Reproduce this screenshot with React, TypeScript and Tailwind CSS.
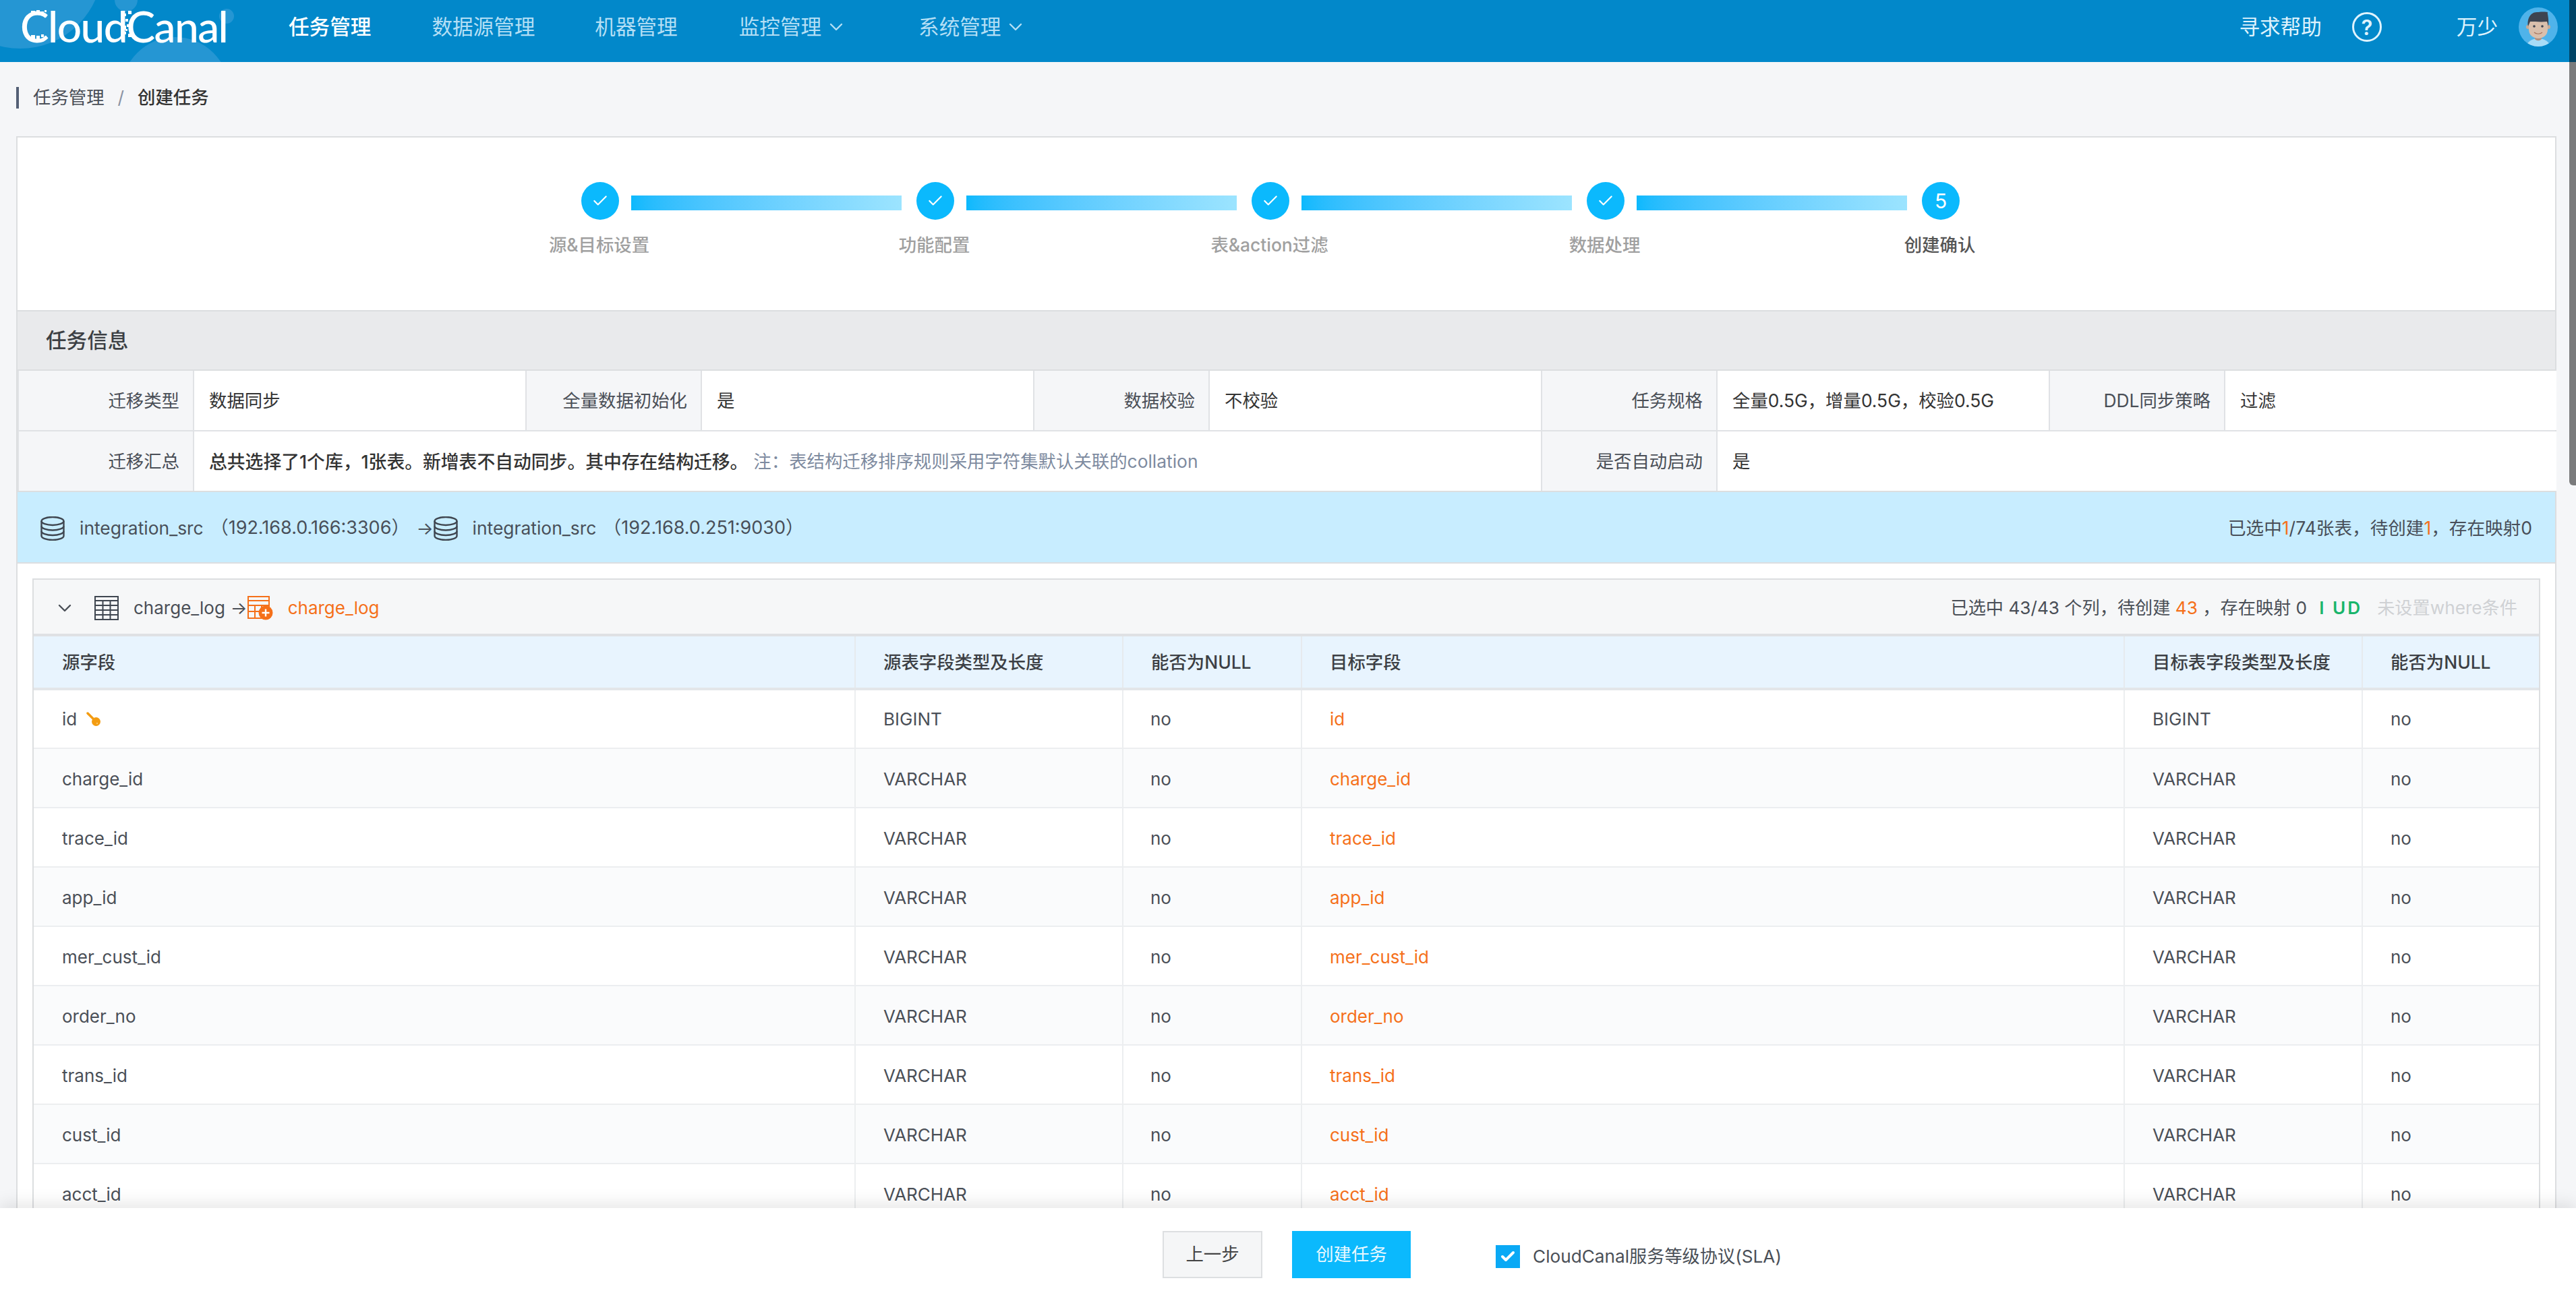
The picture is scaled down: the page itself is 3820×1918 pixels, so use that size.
import React from "react";
import { Check, ChevronDown } from "lucide-react";

const steps = ["源&目标设置", "功能配置", "表&action过滤", "数据处理", "创建确认"];

const rows = [
  { name: "id", type: "BIGINT" },
  { name: "charge_id", type: "VARCHAR" },
  { name: "trace_id", type: "VARCHAR" },
  { name: "app_id", type: "VARCHAR" },
  { name: "mer_cust_id", type: "VARCHAR" },
  { name: "order_no", type: "VARCHAR" },
  { name: "trans_id", type: "VARCHAR" },
  { name: "cust_id", type: "VARCHAR" },
  { name: "acct_id", type: "VARCHAR" },
];

const DbIcon: React.FC = () => (
  <svg width="36" height="36" viewBox="0 0 36 36" fill="none" stroke="#3f4650" strokeWidth="2.4">
    <ellipse cx="18" cy="7" rx="16.5" ry="6" />
    <path d="M1.5 7v22c0 3.3 7.4 6 16.5 6s16.5-2.700 16.500-6V7" />
    <path d="M1.500 14.500c0 3.300 7.400 6 16.500 6s16.500-2.700 16.500-6" />
    <path d="M1.500 22c0 3.300 7.400 6 16.500 6s16.500-2.700 16.500-6" />
  </svg>
);

const TableIcon: React.FC = () => (
  <svg width="36" height="36" viewBox="0 0 36 36" fill="none" stroke="#3f4650" strokeWidth="2">
    <rect x="1" y="1" width="34" height="34" />
    <path d="M1 7h34M1 14h34M1 21h34M1 28h34M12.500 7v28M23.500 7v28" />
  </svg>
);

const NewTableIcon: React.FC = () => (
  <svg width="38" height="36" viewBox="0 0 38 36" fill="none">
    <g stroke="#f5701a" strokeWidth="2">
      <rect x="1" y="1" width="31" height="32" />
      <path d="M1 7h31M1 14h31M1 23h31M11 14v19M21 14v19" />
    </g>
    <circle cx="27" cy="25" r="10.500" fill="#f5701a" />
    <path d="M27 19.500v11M21.500 25h11" stroke="#fff" strokeWidth="2.400" />
  </svg>
);

const KeyIcon: React.FC = () => (
  <svg width="22" height="22" viewBox="0 0 22 22" fill="none">
    <path d="M2 2l9 9" stroke="#f39c12" strokeWidth="3.500" strokeLinecap="round" />
    <circle cx="14.500" cy="14.500" r="6.500" fill="#f39c12" />
    <circle cx="16" cy="17" r="1.200" fill="#f7c46c" />
  </svg>
);

const Avatar: React.FC = () => (
  <svg width="58" height="58" viewBox="0 0 58 58">
    <clipPath id="avatar-clip">
      <circle cx="29" cy="29" r="29" />
    </clipPath>
    <g clipPath="url(#avatar-clip)">
      <rect width="58" height="58" fill="#4fb3ea" />
      <ellipse cx="29" cy="58" rx="17" ry="12" fill="#a8dcf7" />
      <path d="M24 38h10v9c-3 3-7 3-10 0z" fill="#b08f80" />
      <circle cx="14" cy="29" r="3" fill="#c7ab98" />
      <circle cx="44" cy="29" r="3" fill="#c7ab98" />
      <path d="M15 20h28v13c0 8-7 13-14 13s-14-5-14-13z" fill="#d9bfac" />
      <path d="M14 28c-2-10 3-21 13-21 5 0 6-1 16 0-1 2 2 7 1 21l-2-7c-8 1-19 0-25 0z" fill="#3d4350" />
      <circle cx="23" cy="28" r="1.800" fill="#3d4350" />
      <circle cx="35" cy="28" r="1.800" fill="#3d4350" />
      <path d="M23 37c3 3 9 3 12 0" stroke="#a5735c" strokeWidth="1.200" fill="none" />
    </g>
  </svg>
);

// 背景圆 + 像素碎点
const HeaderDecor: React.FC = () => (
  <svg className="absolute left-0 top-0" width="360" height="92" viewBox="0 0 360 92">
    <circle cx="30" cy="-50" r="122" fill="#2596d3" />
    <circle cx="187" cy="0" r="17" fill="#2596d3" />
    <circle cx="260" cy="135" r="80" fill="#2596d3" />
    <circle cx="336" cy="24" r="11" fill="#2596d3" />
  </svg>
);

const LogoDots: React.FC = () => (
  <svg className="absolute left-0 top-0" width="360" height="92" viewBox="0 0 360 92" fill="#fff">
    {[
      [46, 16, 6], [54, 15, 5], [61, 17, 4], [66, 15, 3], [46, 52, 6], [54, 53, 5], [61, 51, 4], [66, 53, 3],
      [183, 20, 4], [190, 16, 5], [179, 30, 5], [186, 28, 4], [181, 38, 6], [188, 36, 4], [183, 47, 4], [190, 50, 5], [186, 43, 3],
    ].map(([x, y, s]) => (
      <rect key={`${x}-${y}`} x={x} y={y} width={s} height={s} />
    ))}
  </svg>
);

const InfoLabel: React.FC<{ children: React.ReactNode }> = ({ children }) => (
  <div className="flex items-center justify-end bg-[#f5f6f8] pr-[20px] pt-[2px] border-l-2 border-r-2 border-[#e0e2e5] text-[#4a4f57]">{children}</div>
);

const InfoValue: React.FC<{ children: React.ReactNode; span?: string }> = ({ children, span }) => (
  <div className={`flex items-center bg-white pl-[22px] pt-[2px] text-[#333] ${span ?? ""}`}>{children}</div>
);

const App: React.FC = () => {
  return (
    <div className="relative h-[1918px] w-full overflow-hidden bg-[#f5f6f8] text-[26.4px] text-[#4a4f57] font-['Inter','Noto_Sans_CJK_SC',sans-serif]">
      <header className="relative flex h-[92px] items-center bg-[#0288ca] pb-[12px] text-[30.6px] text-[#b5dff5]">
        <HeaderDecor />
        <span className="absolute left-[30px] top-[2px] text-[64px] leading-[74px] tracking-[-1.600px] text-white font-medium font-['Lato',sans-serif]">
          CloudCanal
        </span>
        <LogoDots />
        <nav className="relative ml-[428px] flex items-center">
          <span className="font-medium text-white">任务管理</span>
          <span className="ml-[90px]">数据源管理</span>
          <span className="ml-[89px]">机器管理</span>
          <span className="ml-[91px] flex items-center">
            监控管理
            <ChevronDown className="ml-[6px] h-[32px] w-[32px]" strokeWidth={1.800} />
          </span>
          <span className="ml-[106px] flex items-center">
            系统管理
            <ChevronDown className="ml-[6px] h-[32px] w-[32px]" strokeWidth={1.800} />
          </span>
        </nav>
        <div className="relative ml-auto mr-[27px] flex items-center text-[#dff3fd]">
          <span>寻求帮助</span>
          <span className="ml-[45px] flex h-[44px] w-[44px] items-center justify-center rounded-full border-[3px] border-[#dff3fd] text-[31px] font-semibold leading-none">
            ?
          </span>
          <span className="ml-[111px]">万少</span>
          <span className="ml-[31px] flex">
            <Avatar />
          </span>
        </div>
      </header>

      <div className="flex h-[110px] items-center pb-[4px] pl-[24px]">
        <div className="flex h-[32px] items-center border-l-4 border-[#535f75] pl-[21px] text-[#4a4f57]">
          <span>任务管理</span>
          <span className="mx-[20px] text-[#8a93a3]">/</span>
          <span className="font-medium text-[#333]">创建任务</span>
        </div>
      </div>

      <main className="ml-[24px] w-[3767px] border-2 border-b-0 border-[#dcdee0] bg-white">
        <div className="h-[256px] pt-[66px]">
          <div className="flex pl-[836px]">
            {steps.map((step, i) => (
              <div key={step} className="flex items-start">
                <div className="flex h-[56px] w-[56px] items-center justify-center rounded-full bg-[#0bb9fd] text-white">
                  {i < 4 ? <Check className="h-[26px] w-[26px]" strokeWidth={2} /> : <span className="text-[30px]">5</span>}
                </div>
                {i < 4 && (
                  <div className="ml-[18px] mr-[22px] mt-[20px] h-[22px] w-[401px] bg-gradient-to-r from-[#0bb9fd] to-[#9ce4ff]" />
                )}
              </div>
            ))}
          </div>
          <div className="mt-[18px] flex pl-[614px]">
            {steps.map((step, i) => (
              <div key={step} className={`w-[497px] text-center font-medium ${i === 4 ? "text-[#555]" : "text-[#a0a0a0]"}`}>
                {step}
              </div>
            ))}
          </div>
        </div>

        <div className="flex h-[88px] items-center border-t-2 border-[#dcdee0] bg-[#e9eaec] pl-[42px] text-[30.6px] font-medium text-[#3c3f44]">
          任务信息
        </div>

        <div className="grid grid-cols-[262px_491px_262px_491px_262px_491px_262px_491px_262px_491px] grid-rows-[88px_88px] gap-y-[2px] border-y-2 border-[#dcdee0] bg-[#e0e2e5]">
          <InfoLabel>迁移类型</InfoLabel>
          <InfoValue>数据同步</InfoValue>
          <InfoLabel>全量数据初始化</InfoLabel>
          <InfoValue>是</InfoValue>
          <InfoLabel>数据校验</InfoLabel>
          <InfoValue>不校验</InfoValue>
          <InfoLabel>任务规格</InfoLabel>
          <InfoValue>全量0.5G，增量0.5G，校验0.5G</InfoValue>
          <InfoLabel>DDL同步策略</InfoLabel>
          <InfoValue>过滤</InfoValue>

          <InfoLabel>迁移汇总</InfoLabel>
          <InfoValue span="col-span-5">
            <span className="text-[26.8px] font-medium text-[#333]">总共选择了1个库，1张表。新增表不自动同步。其中存在结构迁移。</span>
            <span className="ml-[8px] text-[#7e8ba0]">注：表结构迁移排序规则采用字符集默认关联的collation</span>
          </InfoValue>
          <InfoLabel>是否自动启动</InfoLabel>
          <InfoValue span="col-span-3">是</InfoValue>
        </div>

        <div className="flex h-[106px] items-center justify-between border-b-2 border-[#dcdee0] bg-[#c8edff] pl-[34px] pr-[34px] pt-[3px] text-[#484f59]">
          <div className="flex items-center">
            <DbIcon />
            <span className="ml-[22px]">integration_src</span>
            <span className="ml-[10px] text-[27px]">（192.168.0.166:3306）</span>
            <span className="ml-[10px]">→</span>
            <DbIcon />
            <span className="ml-[22px]">integration_src</span>
            <span className="ml-[10px] text-[27px]">（192.168.0.251:9030）</span>
          </div>
          <div className="text-[26.6px]">
            已选中<span className="text-[#f5701a]">1</span>/74张表，待创建<span className="text-[#f5701a]">1</span>，存在映射0
          </div>
        </div>

        <section className="mx-[22px] mt-[22px] border-x-2 border-t-2 border-[#dcdee0]">
          <div className="flex h-[84px] items-center justify-between border-b-4 border-[#dfe1e4] bg-[#f6f7f8] pl-[30px] pr-[32px] pt-[3px]">
            <div className="flex items-center text-[26px]">
              <ChevronDown className="h-[32px] w-[32px]" strokeWidth={1.800} />
              <span className="ml-[28px] flex">
                <TableIcon />
              </span>
              <span className="ml-[22px]">charge_log</span>
              <span className="ml-[8px]">→</span>
              <NewTableIcon />
              <span className="ml-[22px] text-[#f5701a]">charge_log</span>
            </div>
            <div className="flex items-center text-[26.2px]">
              <span>
                已选中 43/43 个列，待创建 <span className="text-[#f5701a]">43</span> ，存在映射 0
              </span>
              <span className="ml-[18px] font-semibold tracking-[3px] text-[#19b56b]">I UD</span>
              <span className="ml-[22px] text-[#cfd1d4]">未设置where条件</span>
            </div>
          </div>

          <table className="w-full table-fixed border-collapse text-[26px]">
            <colgroup>
              <col className="w-[1218px]" />
              <col className="w-[397px]" />
              <col className="w-[265px]" />
              <col className="w-[1220px]" />
              <col className="w-[353px]" />
              <col />
            </colgroup>
            <thead>
              <tr className="h-[78px] border-b-4 border-[#e3e6e9] bg-[#e8f4fe] text-left font-medium text-[#3c3f44]">
                {["源字段", "源表字段类型及长度", "能否为NULL", "目标字段", "目标表字段类型及长度", "能否为NULL"].map((title, i) => (
                  <th key={i} className="border-r-2 border-[#e6eaee] pl-[41px] pt-[2px] text-[26.4px] font-medium first:pl-[42px] last:border-r-0">
                    {title}
                  </th>
                ))}
              </tr>
            </thead>
            <tbody>
              {rows.map((row, i) => {
                // 首行文字比其余行略靠上
                const cell = i === 0 ? "" : "pt-[3px]";
                return (
                  <tr key={row.name} className={`h-[88px] border-b-2 border-[#eceef0] ${i % 2 ? "bg-[#fafbfc]" : "bg-white"}`}>
                    <td className={`border-r-2 border-[#eceef0] pl-[42px] ${cell}`}>
                      <span className="flex items-center">
                        {row.name}
                        {i === 0 && (
                          <span className="ml-[14px] flex">
                            <KeyIcon />
                          </span>
                        )}
                      </span>
                    </td>
                    <td className={`border-r-2 border-[#eceef0] pl-[41px] ${cell}`}>{row.type}</td>
                    <td className={`border-r-2 border-[#eceef0] pl-[40px] ${cell}`}>no</td>
                    <td className={`border-r-2 border-[#eceef0] pl-[41px] text-[#f5701a] ${cell}`}>{row.name}</td>
                    <td className={`border-r-2 border-[#eceef0] pl-[41px] ${cell}`}>{row.type}</td>
                    <td className={`pl-[41px] ${cell}`}>no</td>
                  </tr>
                );
              })}
            </tbody>
          </table>
        </section>
      </main>

      <footer className="absolute bottom-0 left-0 flex h-[126px] w-full bg-white pl-[1724px] pt-[34px] shadow-[0_-6px_24px_rgba(0,0,0,0.1)]">
        <button className="h-[70px] w-[148px] border-2 border-[#dddfe1] bg-[#f5f6f7] text-[#444]">上一步</button>
        <button className="ml-[44px] h-[70px] w-[176px] bg-[#0bb9fd] text-[#e8f8ff]">创建任务</button>
        <div className="ml-[126px] flex h-[70px] items-center pt-[6px]">
          <span className="flex h-[34px] w-[36px] items-center justify-center bg-[#0aa9f5] text-white">
            <Check className="h-[24px] w-[24px]" strokeWidth={4} />
          </span>
          <span className="ml-[19px] text-[26.2px]">CloudCanal服务等级协议(SLA)</span>
        </div>
      </footer>

      <div className="absolute right-0 top-0 h-[720px] w-[10px] rounded-bl-[6px] bg-black/50" />
    </div>
  );
};

export default App;
